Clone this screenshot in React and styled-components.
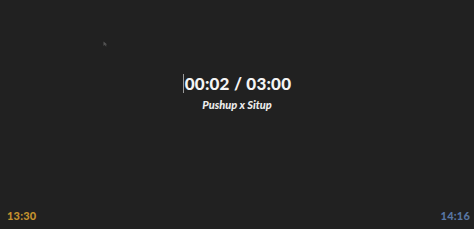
import styled, { createGlobalStyle } from 'styled-components';

const Global = createGlobalStyle`
  html, body { margin: 0; padding: 0; background: #212121; }
  #root { height: 229px; }
`;

const Screen = styled.div`
  height: 229px;
  display: flex;
  flex-direction: column;
  background: #212121;
  font-family: Lato, "Open Sans", sans-serif;
  position: relative;
`;

const Stage = styled.div`
  flex: 1;
  display: flex;
  flex-direction: column;
  align-items: center;
  justify-content: center;
  padding-bottom: 24px;
`;

const Timer = styled.div`
  display: flex;
  align-items: center;
  font-size: 17px;
  font-weight: 900;
  color: #f4f4f4;
  line-height: 20px;
  letter-spacing: 0.2px;
`;

const Caret = styled.span`
  width: 1px;
  height: 19px;
  background: #9a9a9a;
  margin-right: 1px;
`;

const Label = styled.div`
  margin-top: 4px;
  font-size: 11px;
  font-weight: 900;
  font-style: italic;
  color: #ececec;
  line-height: 14px;
`;

const Footer = styled.div`
  display: flex;
  justify-content: space-between;
  align-items: center;
  padding: 0 4px 7px 7px;
`;

const Clock = styled.span`
  font-size: 11px;
  font-weight: 900;
  color: ${p => p.$tone};
  letter-spacing: 0.2px;
`;

const Pointer = styled.svg`
  position: absolute;
  left: 103px;
  top: 41px;
`;

export default function App() {
  return (
    <>
      <Global />
      <Screen>
        <Pointer width="5" height="6" viewBox="0 0 5 6">
          <path d="M0.5 0.5 L0.5 5 L1.8 3.8 L3 5.5 L3.6 5.1 L2.5 3.5 L4.2 3.5 Z" fill="#555" />
        </Pointer>
        <Stage>
          <Timer>
            <Caret />
            00:02 / 03:00
          </Timer>
          <Label>Pushup x Situp</Label>
        </Stage>
        <Footer>
          <Clock $tone="#c4922e">13:30</Clock>
          <Clock $tone="#5876a3">14:16</Clock>
        </Footer>
      </Screen>
    </>
  );
}
